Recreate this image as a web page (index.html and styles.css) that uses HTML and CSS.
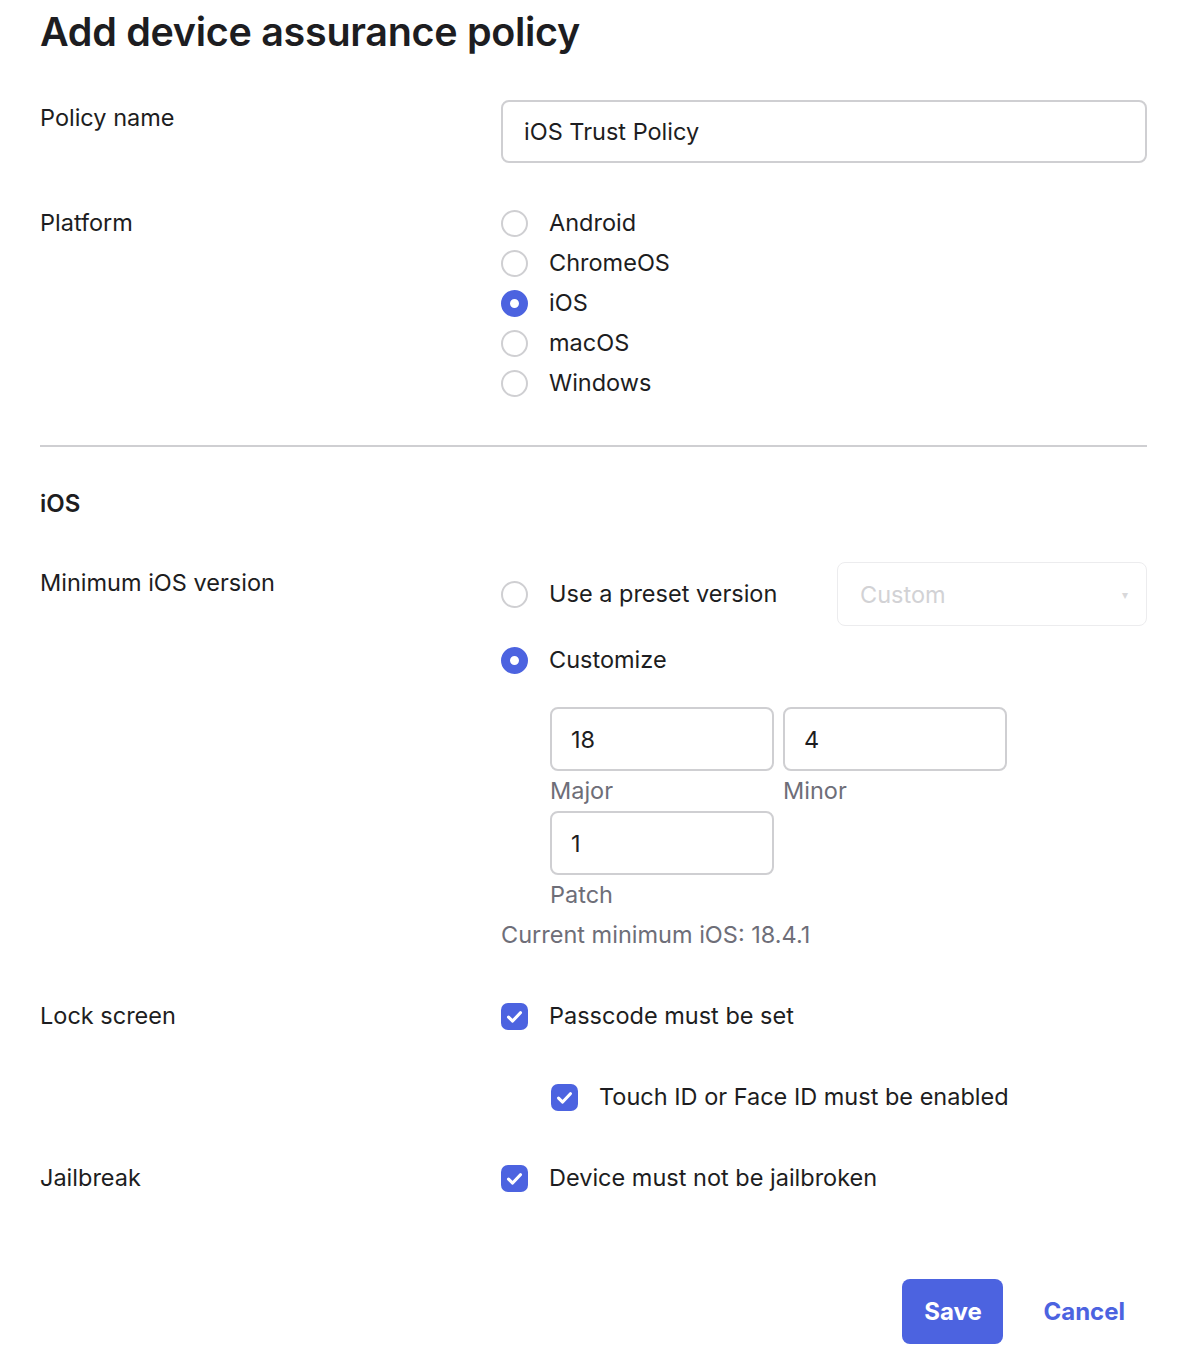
FILE: index.html
```html
<!DOCTYPE html>
<html lang="en">
<head>
  <meta charset="UTF-8">
  <meta name="viewport" content="width=device-width, initial-scale=1.0">
  <title>Add device assurance policy</title>
  <link rel="stylesheet" href="styles.css">
</head>
<body>
  <div class="page">
    <h1>Add device assurance policy</h1>

    <div class="row row-name">
      <div class="label">Policy name</div>
      <div class="field">
        <input class="text-input" type="text" value="iOS Trust Policy">
      </div>
    </div>

    <div class="row row-platform">
      <div class="label">Platform</div>
      <div class="field radio-list">
        <label class="option"><span class="radio"></span>Android</label>
        <label class="option"><span class="radio"></span>ChromeOS</label>
        <label class="option"><span class="radio checked"></span>iOS</label>
        <label class="option"><span class="radio"></span>macOS</label>
        <label class="option"><span class="radio"></span>Windows</label>
      </div>
    </div>

    <hr class="divider">

    <h2>iOS</h2>

    <div class="row row-version">
      <div class="label">Minimum iOS version</div>
      <div class="field">
        <div class="preset">
          <label class="option"><span class="radio"></span>Use a preset version</label>
          <div class="select">
            <span>Custom</span>
            <span class="caret">&#9662;</span>
          </div>
        </div>
        <label class="option customize"><span class="radio checked"></span>Customize</label>
        <div class="version-grid">
          <div class="version-part">
            <input class="text-input small" type="text" value="18">
            <span class="hint">Major</span>
          </div>
          <div class="version-part">
            <input class="text-input small" type="text" value="4">
            <span class="hint">Minor</span>
          </div>
          <div class="version-part">
            <input class="text-input small" type="text" value="1">
            <span class="hint">Patch</span>
          </div>
        </div>
        <div class="current">Current minimum iOS: 18.4.1</div>
      </div>
    </div>

    <div class="row row-lock">
      <div class="label">Lock screen</div>
      <div class="field">
        <label class="option"><span class="checkbox"><svg viewBox="0 0 16 16"><path d="M4.2 8.4l2.6 2.5L11.8 5.6"/></svg></span>Passcode must be set</label>
        <label class="option nested"><span class="checkbox"><svg viewBox="0 0 16 16"><path d="M4.2 8.4l2.6 2.5L11.8 5.6"/></svg></span>Touch ID or Face ID must be enabled</label>
      </div>
    </div>

    <div class="row row-jail">
      <div class="label">Jailbreak</div>
      <div class="field">
        <label class="option"><span class="checkbox"><svg viewBox="0 0 16 16"><path d="M4.2 8.4l2.6 2.5L11.8 5.6"/></svg></span>Device must not be jailbroken</label>
      </div>
    </div>

    <div class="actions">
      <button class="btn-save">Save</button>
      <button class="btn-cancel">Cancel</button>
    </div>
  </div>
</body>
</html>
```

FILE: styles.css
```css
body {
  margin: 0;
  background-color: #ffffff;
  color: #1d1d21;
  font-family: Inter, "Noto Sans", sans-serif;
  font-size: 23.5px;
}

.page {
  padding: 0 37px 0 40px;
}

h1 {
  margin: 0;
  padding-top: 8px;
  font-size: 39.5px;
  font-weight: 600;
  letter-spacing: -0.3px;
  line-height: 48px;
}

h2 {
  margin: 0;
  padding: 42px 0 0;
  font-size: 24px;
  font-weight: 600;
  line-height: 30px;
}

.row {
  display: grid;
  grid-template-columns: 461px 1fr;
}

.label {
  line-height: 28px;
}

.row-name {
  margin-top: 44px;
}

.row-name .label {
  padding-top: 4px;
}

.text-input {
  box-sizing: border-box;
  width: 100%;
  height: 63px;
  border: 2px solid #cfcfd2;
  border-radius: 8px;
  padding: 0 21px;
  font-family: inherit;
  font-size: 23.5px;
  color: #1d1d21;
  background: #ffffff;
}

.text-input.small {
  height: 64px;
  padding: 0 19px;
}

.row-platform {
  margin-top: 46px;
}

.radio-list {
  display: flex;
  flex-direction: column;
  gap: 12px;
}

.option {
  display: flex;
  align-items: center;
  gap: 21px;
  line-height: 28px;
}

.radio {
  box-sizing: border-box;
  width: 27px;
  height: 27px;
  border: 2px solid #cfcfd2;
  border-radius: 50%;
  flex-shrink: 0;
}

.radio.checked {
  border: 9px solid #4c63e0;
  background: #ffffff;
}

.divider {
  margin: 48px 0 0;
  border: none;
  border-top: 2px solid #cfcfd2;
}

.row-version {
  margin-top: 50px;
}

.preset {
  display: flex;
  align-items: center;
  justify-content: space-between;
  margin-top: -7px;
}

.select {
  box-sizing: border-box;
  width: 310px;
  height: 64px;
  border: 1.5px solid #ececee;
  border-radius: 8px;
  display: flex;
  align-items: center;
  justify-content: space-between;
  padding: 0 18px 0 22px;
  color: #d2d2d5;
}

.caret {
  font-size: 12px;
  color: #d8d8da;
}

.customize {
  margin-top: 20px;
}

.version-grid {
  display: grid;
  grid-template-columns: 224px 224px;
  column-gap: 9px;
  row-gap: 6px;
  margin-top: 33px;
  margin-left: 49px;
}

.version-part {
  display: flex;
  flex-direction: column;
}

.hint {
  color: #6e6e78;
  line-height: 28px;
  margin-top: 6px;
}

.current {
  color: #6e6e78;
  margin-top: 12px;
  line-height: 28px;
}

.checkbox {
  box-sizing: border-box;
  width: 27px;
  height: 27px;
  border-radius: 7px;
  background: #4c63e0;
  display: flex;
  align-items: center;
  justify-content: center;
  flex-shrink: 0;
}

.checkbox svg {
  width: 25px;
  height: 25px;
  fill: none;
  stroke: #ffffff;
  stroke-width: 2;
  stroke-linecap: round;
  stroke-linejoin: round;
}

.row-lock {
  margin-top: 53px;
}

.nested {
  margin-top: 53px;
  margin-left: 50px;
}

.row-jail {
  margin-top: 53px;
}

.actions {
  display: flex;
  justify-content: flex-end;
  align-items: center;
  gap: 18px;
  margin-top: 87px;
}

.btn-save {
  width: 101px;
  height: 65px;
  border: none;
  border-radius: 8px;
  background: #4c63e0;
  color: #ffffff;
  font-family: inherit;
  font-size: 24px;
  font-weight: 700;
}

.btn-cancel {
  border: none;
  background: none;
  color: #4c63e0;
  font-family: inherit;
  font-size: 24px;
  font-weight: 700;
  padding: 0 22px;
}
```
